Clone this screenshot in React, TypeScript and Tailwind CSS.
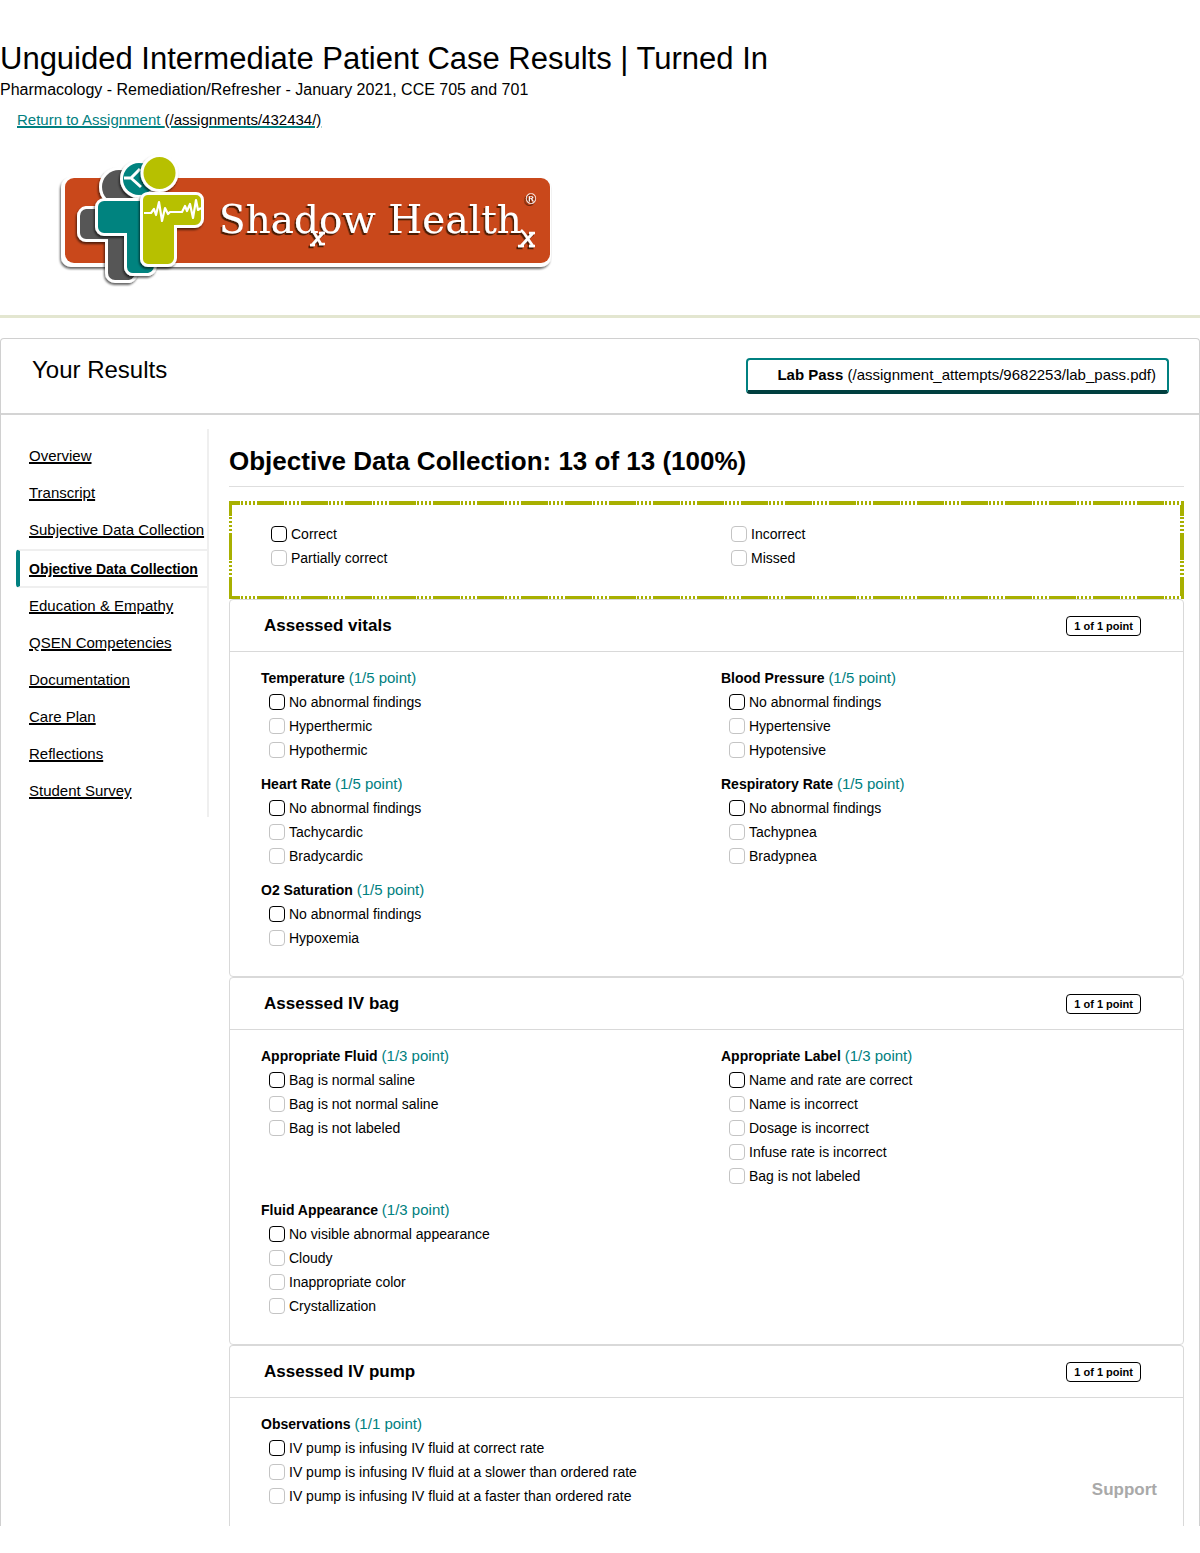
import React from "react";

type Item = { label: string; checked?: boolean };
type Group = { name: string; points: string; items: Item[] };
type Section = { title: string; groups: Group[] };

const NAV = [
  "Overview",
  "Transcript",
  "Subjective Data Collection",
  "Objective Data Collection",
  "Education & Empathy",
  "QSEN Competencies",
  "Documentation",
  "Care Plan",
  "Reflections",
  "Student Survey",
];
const ACTIVE = "Objective Data Collection";

const on = (label: string): Item => ({ label, checked: true });
const off = (label: string): Item => ({ label });

const SECTIONS: Section[] = [
  {
    title: "Assessed vitals",
    groups: [
      { name: "Temperature", points: "(1/5 point)", items: [on("No abnormal findings"), off("Hyperthermic"), off("Hypothermic")] },
      { name: "Blood Pressure", points: "(1/5 point)", items: [on("No abnormal findings"), off("Hypertensive"), off("Hypotensive")] },
      { name: "Heart Rate", points: "(1/5 point)", items: [on("No abnormal findings"), off("Tachycardic"), off("Bradycardic")] },
      { name: "Respiratory Rate", points: "(1/5 point)", items: [on("No abnormal findings"), off("Tachypnea"), off("Bradypnea")] },
      { name: "O2 Saturation", points: "(1/5 point)", items: [on("No abnormal findings"), off("Hypoxemia")] },
    ],
  },
  {
    title: "Assessed IV bag",
    groups: [
      { name: "Appropriate Fluid", points: "(1/3 point)", items: [on("Bag is normal saline"), off("Bag is not normal saline"), off("Bag is not labeled")] },
      {
        name: "Appropriate Label",
        points: "(1/3 point)",
        items: [on("Name and rate are correct"), off("Name is incorrect"), off("Dosage is incorrect"), off("Infuse rate is incorrect"), off("Bag is not labeled")],
      },
      { name: "Fluid Appearance", points: "(1/3 point)", items: [on("No visible abnormal appearance"), off("Cloudy"), off("Inappropriate color"), off("Crystallization")] },
    ],
  },
  {
    title: "Assessed IV pump",
    groups: [
      {
        name: "Observations",
        points: "(1/1 point)",
        items: [
          on("IV pump is infusing IV fluid at correct rate"),
          off("IV pump is infusing IV fluid at a slower than ordered rate"),
          off("IV pump is infusing IV fluid at a faster than ordered rate"),
        ],
      },
    ],
  },
];

function Check({ label, checked }: Item) {
  return (
    <label className="flex h-6 items-center gap-1 text-sm">
      <input
        type="checkbox"
        defaultChecked={checked}
        className="size-4 shrink-0 appearance-none rounded border border-[#c4c4c4] bg-white checked:border-black"
      />
      {label}
    </label>
  );
}

function Logo() {
  return (
    <svg role="img" aria-label="Shadow Health" width="500" height="134" viewBox="54 153 500 134" className="block">
      <defs>
        <filter id="drop" x="-10%" y="-10%" width="120%" height="125%">
          <feDropShadow dx="-1" dy="2" stdDeviation="1" floodColor="#000" floodOpacity="0.6" />
        </filter>
        <filter id="text-drop" x="-10%" y="-20%" width="120%" height="150%">
          <feDropShadow dx="-1.5" dy="2" stdDeviation="0.7" floodColor="#3c1204" floodOpacity="0.9" />
        </filter>
      </defs>
      <rect x="61" y="177" width="490" height="90" rx="10" fill="#fff" filter="url(#drop)" />
      <rect x="65" y="178" width="485" height="85" rx="9" fill="#c9481b" />
      <g stroke="#fff" strokeWidth="6" strokeLinejoin="round" paintOrder="stroke">
        <g fill="#575757" filter="url(#drop)">
          <circle cx="119" cy="187" r="17" />
          <path d="M86 209h38a5 5 0 0 1 5 5v56h6a8 8 0 0 1-6 10h-14a7 7 0 0 1-7-7v-34H86a6 6 0 0 1-6-6v-17a7 7 0 0 1 6-7z" />
        </g>
        <g fill="#00837f" filter="url(#drop)">
          <circle cx="139" cy="179" r="16" />
          <path d="M104 201h45v65h5a8 8 0 0 1-6 7h-14a6 6 0 0 1-7-6v-34h-23a6 6 0 0 1-6-6v-20a6 6 0 0 1 6-6z" />
        </g>
      </g>
      <path d="M124 178h7l9-9M131 178l10 9" fill="none" stroke="#fff" strokeWidth="3" />
      <g stroke="#fff" strokeWidth="6" strokeLinejoin="round" paintOrder="stroke" fill="#b7c000">
        <g filter="url(#drop)">
          <circle cx="159.500" cy="173" r="16" />
          <path d="M149 195h47a5 5 0 0 1 5 5v19a6 6 0 0 1-6 6h-21v33a6 6 0 0 1-6 6h-20a5 5 0 0 1-5-5v-59a5 5 0 0 1 6-5z" />
        </g>
      </g>
      <path
        d="M144 213h7l3-4 2 6 3-13 3 19 3-13 3 6 2-2h12l3-6 2 5 3-7 3 14 3-18 2 10 3-2"
        fill="none"
        stroke="#fff"
        strokeWidth="2.200"
        strokeLinejoin="round"
      />
      <g filter="url(#text-drop)" fill="#fff">
        <text x="219" y="233" fontFamily="'DejaVu Serif', serif" fontSize="39">
          Shadow Health
        </text>
        <g fill="none" stroke="#fff" strokeWidth="2.600">
          <path d="M313 231l8 13M323 233l-11 12M310 245h5M319 244h6M319 233h6" />
          <path d="M521 230l3 3 9 13M533 233l-12 13M518 246h6M529 246h6M529 233h6" />
        </g>
        <text x="524" y="204" fontFamily="'DejaVu Sans', sans-serif" fontSize="14">
          ®
        </text>
      </g>
    </svg>
  );
}

const DASH_X =
  "bg-[repeating-linear-gradient(90deg,#a8b000_0_11px,#fff_11px_12px,#a8b000_12px_14px,#fff_14px_16px,#a8b000_16px_18px,#fff_18px_20px,#a8b000_20px_22px,#fff_22px_24px,#a8b000_24px_26px,#fff_26px_28px,#a8b000_28px_44px)]";
const DASH_Y =
  "bg-[repeating-linear-gradient(180deg,#a8b000_0_11px,#fff_11px_12px,#a8b000_12px_14px,#fff_14px_16px,#a8b000_16px_18px,#fff_18px_20px,#a8b000_20px_22px,#fff_22px_24px,#a8b000_24px_26px,#fff_26px_28px,#a8b000_28px_44px)]";

function Legend() {
  return (
    <div>
      <div className={`h-1 ${DASH_X}`} />
      <div className="flex">
        <div className={`w-[3px] shrink-0 ${DASH_Y}`} />
        <div className="grid grow grid-cols-[460px_1fr] pt-[17px] pb-[26px] pl-[39px]">
          <Check label="Correct" checked />
          <Check label="Incorrect" />
          <Check label="Partially correct" />
          <Check label="Missed" />
        </div>
        <div className={`w-1 shrink-0 ${DASH_Y}`} />
      </div>
      <div className={`h-[3px] ${DASH_X}`} />
    </div>
  );
}

function ResultSection({ section, last }: { section: Section; last: boolean }) {
  return (
    <section className={last ? "rounded-t border border-b-0 border-[#d9d9d9]" : "rounded border border-[#d9d9d9]"}>
      <header className="flex h-[52px] items-center justify-between border-b border-[#d9d9d9] pr-[42px] pl-[34px]">
        <h3 className="text-[17px] font-bold">{section.title}</h3>
        <span className="rounded border border-black px-[7px] py-px text-[11px] leading-4 font-bold">1 of 1 point</span>
      </header>
      <div className={last ? "grid grid-cols-2 pt-[14px] pr-0.5 pb-2 pl-[31px]" : "grid grid-cols-2 pt-[14px] pr-0.5 pb-4 pl-[31px]"}>
        {section.groups.map((g) => (
          <fieldset key={g.name} className="mb-2.5">
            <legend className="h-6 text-sm leading-6 font-bold">
              {g.name} <span className="text-[15px] font-normal text-[#008080]">{g.points}</span>
            </legend>
            <div className="pl-2">
              {g.items.map((it) => (
                <Check key={it.label} {...it} />
              ))}
            </div>
          </fieldset>
        ))}
      </div>
    </section>
  );
}

export default function App() {
  return (
    <div className="bg-white pt-10 pb-7 font-['Liberation_Sans',Arial,sans-serif] text-black">
      <h1 className="text-[31px] leading-[38px]">Unguided Intermediate Patient Case Results | Turned In</h1>
      <p className="leading-6">Pharmacology - Remediation/Refresher - January 2021, CCE 705 and 701</p>
      <p className="pt-1.5 pl-[17px] text-[15px] leading-6">
        <a href="#assignment" className="text-[#008080] underline decoration-[#008080] decoration-2">
          Return to Assignment <span className="text-black">(/assignments/432434/)</span>
        </a>
      </p>
      <div className="pt-[21px] pb-7 pl-[54px]">
        <Logo />
      </div>
      <hr className="border-t-[3px] border-[#e3e6d0]" />

      <main className="relative mt-5 flex flex-col rounded-t border border-b-0 border-[#d0d0d0]">
        <header className="flex h-[76px] items-start justify-between border-b-2 border-[#d4d4d4] pt-[19px] pr-[30px] pl-[31px]">
          <h2 className="text-2xl leading-6">Your Results</h2>
          <a
            href="#lab-pass"
            className="rounded border-2 border-b-4 border-[#008080] border-b-[#003f3f] pr-[11px] pl-[29px] text-[15px] leading-[30px]"
          >
            <b>Lab Pass</b> (/assignment_attempts/9682253/lab_pass.pdf)
          </a>
        </header>

        <div className="flex items-start">
          <nav className="mt-3.5 ml-[15px] w-[193px] shrink-0 border-r-2 border-[#efefef] pt-[9px] pb-[7px]">
            <ul>
              {NAV.map((n) => (
                <li
                  key={n}
                  className={
                    n === ACTIVE
                      ? "flex h-[39px] items-center rounded-l-sm border-y-2 border-l-4 border-y-[#efefef] border-l-[#008080] pl-[9px] text-sm font-bold whitespace-nowrap"
                      : "flex h-[37px] items-center pl-[13px] text-[15px] whitespace-nowrap"
                  }
                >
                  <a href="#results" className="underline decoration-2 underline-offset-1">
                    {n}
                  </a>
                </li>
              ))}
            </ul>
          </nav>

          <div className="mr-[15px] ml-5 flex grow flex-col">
            <h2 className="mt-[30px] mb-3.5 border-b border-[#dedede] pb-[9px] text-[26px] leading-8 font-bold">
              Objective Data Collection: 13 of 13 (100%)
            </h2>
            <Legend />
            {SECTIONS.map((s, i) => (
              <ResultSection key={s.title} section={s} last={i === SECTIONS.length - 1} />
            ))}
          </div>
        </div>

        <button type="button" className="absolute right-[42px] bottom-6 text-[17px] font-bold text-[#a9a9a9]">
          Support
        </button>
      </main>
    </div>
  );
}
